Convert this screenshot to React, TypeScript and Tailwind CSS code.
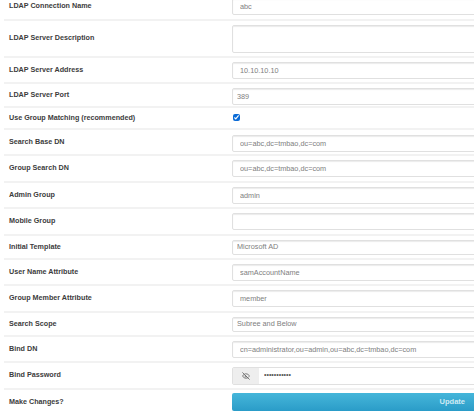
import { EyeOff } from "lucide-react";

const inputCls =
  "block w-full h-full bg-white border border-[#e0e0e0] rounded-[2px] shadow-[inset_0_1px_1px_rgba(0,0,0,0.08)] text-[7.3px] text-[#808080] outline-none";

function Row({ label, h, children, last }: { label: string; h: number; children: React.ReactNode; last?: boolean }) {
  return (
    <div
      className={`flex items-center ml-[4px] pl-[5px] ${last ? "" : "border-b-2 border-[#f2f2f2]"}`}
      style={{ height: h }}
    >
      <div className="w-[223px] text-[7.2px] font-bold text-[#3c3c3c] whitespace-nowrap">{label}</div>
      <div className="flex-1 -mr-[12px]">{children}</div>
    </div>
  );
}

function Text({ value, shift = 0 }: { value: string; shift?: number }) {
  return (
    <div className="h-[17px]" style={{ marginTop: shift }}>
      <input readOnly value={value} className={`${inputCls} px-[7px]`} />
    </div>
  );
}

function Pick({ value }: { value: string }) {
  return (
    <div className="h-[15px]">
      <select value={value} onChange={() => {}} className={`${inputCls} pl-[4px] appearance-none border-[#cccccc] text-[#707070]`}>
        <option>{value}</option>
      </select>
    </div>
  );
}

export default function App() {
  return (
    <div className="w-[474px] h-[420px] overflow-hidden bg-white font-['Liberation_Sans',Arial,sans-serif]">
      <div className="-mt-[7px]">
        <Row label="LDAP Connection Name" h={28}><Text value="abc" /></Row>
        <Row label="LDAP Server Description" h={37}>
          <div className="h-[28px]">
            <textarea readOnly value="" className={`${inputCls} resize-none px-[7px]`} />
          </div>
        </Row>
        <Row label="LDAP Server Address" h={26}><Text value="10.10.10.10" /></Row>
        <Row label="LDAP Server Port" h={24}>
          <div className="h-[17px] mt-[3px]">
            <input readOnly value="389" className={`${inputCls} px-[4px]`} />
          </div>
        </Row>
        <Row label="Use Group Matching (recommended)" h={22}>
          <input type="checkbox" readOnly checked className="block w-[7px] h-[7px] -mt-[1px] ml-[1px] accent-[#0b6bd6]" />
        </Row>
        <Row label="Search Base DN" h={26}><Text value="ou=abc,dc=tmbao,dc=com" shift={2} /></Row>
        <Row label="Group Search DN" h={27}><Text value="ou=abc,dc=tmbao,dc=com" /></Row>
        <Row label="Admin Group" h={26}><Text value="admin" /></Row>
        <Row label="Mobile Group" h={27}><Text value="" /></Row>
        <Row label="Initial Template" h={24}><Pick value="Microsoft AD" /></Row>
        <Row label="User Name Attribute" h={26}><Text value="samAccountName" /></Row>
        <Row label="Group Member Attribute" h={27}><Text value="member" /></Row>
        <Row label="Search Scope" h={24}><Pick value="Subree and Below" /></Row>
        <Row label="Bind DN" h={26}><Text value="cn=administrator,ou=admin,ou=abc,dc=tmbao,dc=com" /></Row>
        <Row label="Bind Password" h={27}>
          <div className="flex h-[18px] border border-[#e0e0e0] rounded-[2px]">
            <div className="w-[26px] flex items-center justify-center bg-[#eeeeee] text-[#666666]">
              <EyeOff size={8} strokeWidth={2.5} />
            </div>
            <input readOnly type="password" value="•••••••••••" className="flex-1 min-w-0 px-[5px] text-[7px] text-[#555555] outline-none" />
          </div>
        </Row>
        <Row label="Make Changes?" h={24} last>
          <div className="h-[18px] pr-[21px] rounded-[2px] flex items-center justify-end bg-gradient-to-b from-[#45b6da] to-[#2a9cc8] text-[7.5px] font-bold text-[#cfeaf4]">
            <span>Update</span>
          </div>
        </Row>
      </div>
    </div>
  );
}
